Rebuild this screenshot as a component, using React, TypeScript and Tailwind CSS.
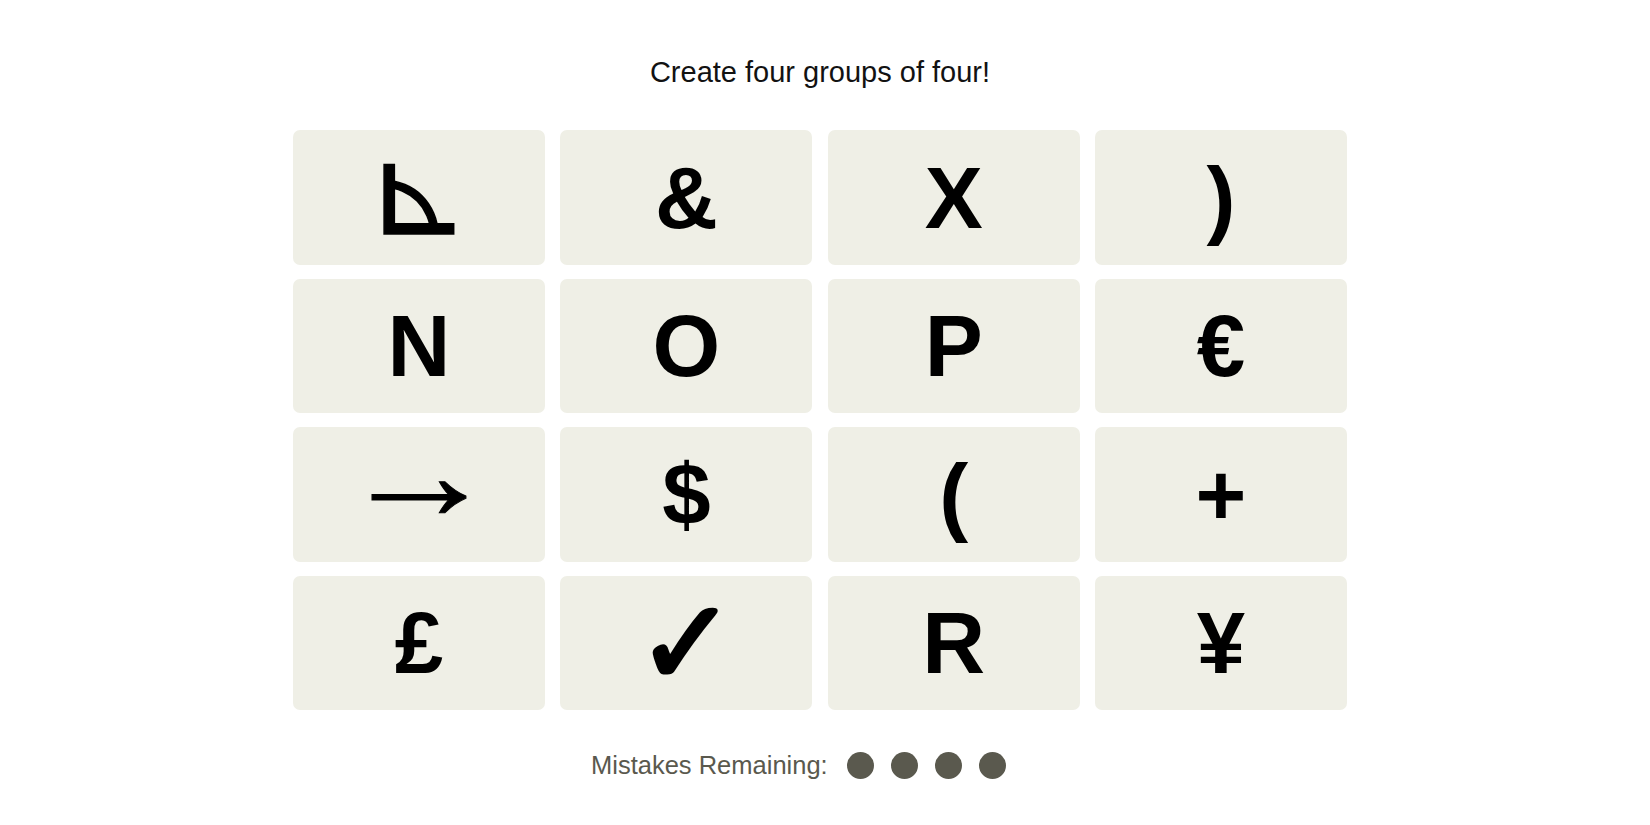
import React from "react";

type Tile = { ch: string; cls?: string };

const tiles: Tile[] = [
  { ch: "⊾", cls: "font-['DejaVu_Sans',sans-serif] font-normal text-[124px] leading-[100px] [-webkit-text-stroke:1.5px_#000] -translate-y-[6px]" },
  { ch: "&" },
  { ch: "X" },
  { ch: ")" },
  { ch: "N" },
  { ch: "O" },
  { ch: "P" },
  { ch: "€" },
  { ch: "→", cls: "font-['Liberation_Serif',serif] font-normal text-[132px] leading-[50px] [-webkit-text-stroke:1px_#000] -translate-y-[19px] scale-x-[1.2]" },
  { ch: "$" },
  { ch: "(" },
  { ch: "+" },
  { ch: "£" },
  { ch: "✓", cls: "font-['DejaVu_Sans',sans-serif] font-bold text-[118px] leading-[100px] [-webkit-text-stroke:4px_#000]" },
  { ch: "R" },
  { ch: "¥" },
];

export default function App() {
  return (
    <div className="min-h-screen bg-white font-['Liberation_Sans',Arial,sans-serif] text-black">
      <div className="flex flex-col items-center pr-[10px]">
        <div className="pt-[56px] text-[29px] leading-[32px] text-[#121212]">
          Create four groups of four!
        </div>
        <div className="mt-[42px] grid w-[1054px] grid-cols-4 auto-rows-[134.5px] gap-x-[15.3px] gap-y-[14px]">
          {tiles.map((t, i) => (
            <div
              key={i}
              className="flex items-center justify-center rounded-[7px] bg-[#efefe6]"
            >
              <span
                className={
                  t.cls
                    ? t.cls + " inline-block"
                    : "inline-block font-['Liberation_Sans',Arial,sans-serif] font-bold text-[87px] leading-none"
                }
              >
                {t.ch}
              </span>
            </div>
          ))}
        </div>
        <div className="mt-[41px] w-[1054px] pl-[298px]">
          <div className="flex items-center">
            <span className="text-[25.5px] leading-[28px] text-[#5a594e]">
              Mistakes Remaining:
            </span>
            <div className="ml-[19px] flex items-center gap-[17px]">
              <span className="block h-[27px] w-[27px] rounded-full bg-[#5a594e]" />
              <span className="block h-[27px] w-[27px] rounded-full bg-[#5a594e]" />
              <span className="block h-[27px] w-[27px] rounded-full bg-[#5a594e]" />
              <span className="block h-[27px] w-[27px] rounded-full bg-[#5a594e]" />
            </div>
          </div>
        </div>
      </div>
    </div>
  );
}
